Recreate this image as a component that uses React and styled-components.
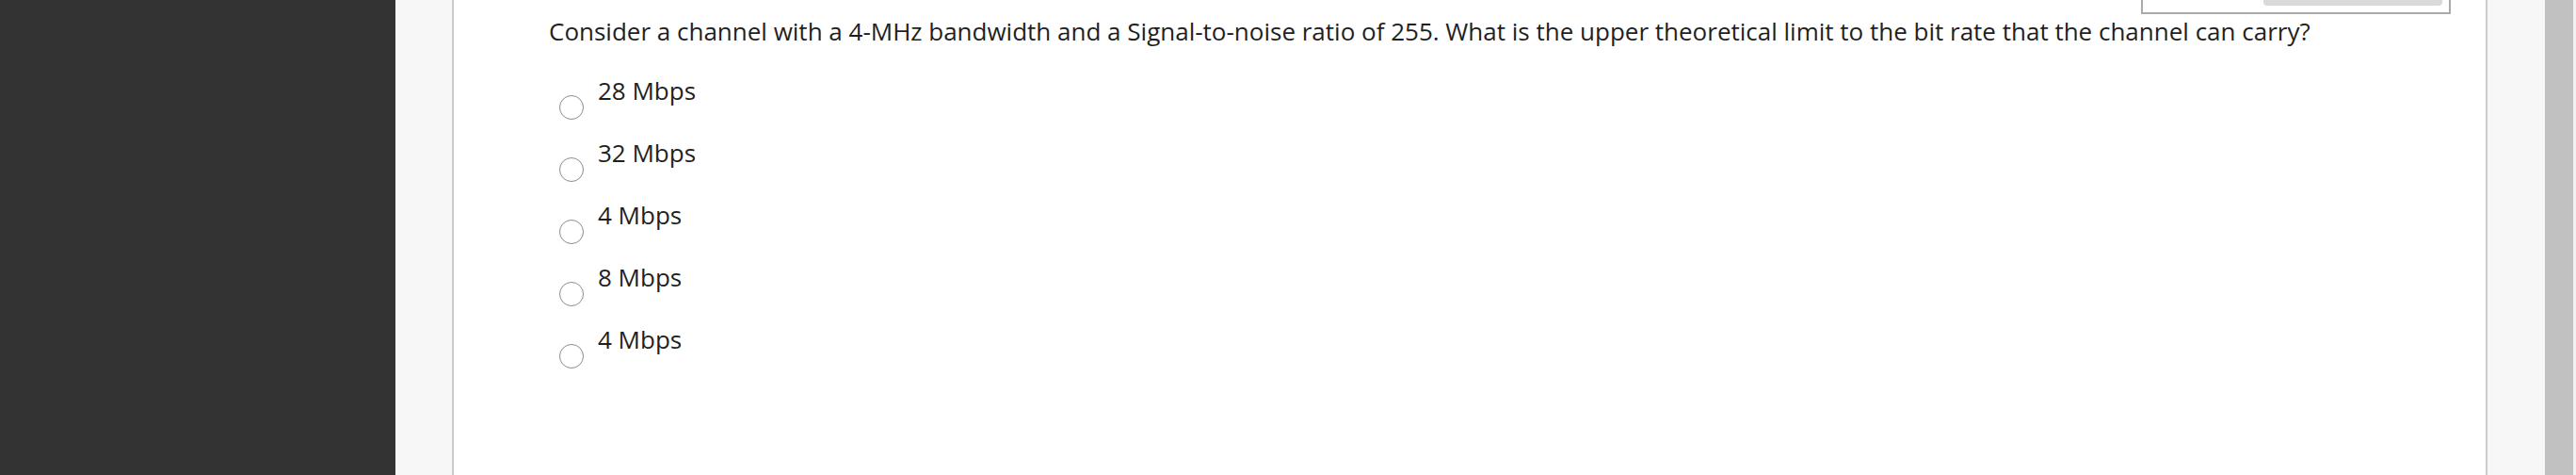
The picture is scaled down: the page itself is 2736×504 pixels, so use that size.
import React from "react";
import styled, { createGlobalStyle } from "styled-components";

const GlobalStyle = createGlobalStyle`
    html, body {
        margin: 0;
        padding: 0;
        background: #ffffff;
    }
`;

const answers = ["28 Mbps", "32 Mbps", "4 Mbps", "8 Mbps", "4 Mbps"];

const App = () => {
    return (
        <>
            <GlobalStyle />
            <Page>
                <Sidebar />
                <Gutter />
                <Content>
                    <Toolbar>
                        <TopBox>
                            <TopBar />
                        </TopBox>
                    </Toolbar>
                    <Question>
                        Consider a channel with a 4-MHz bandwidth and a Signal-to-noise ratio of 255. What is the upper theoretical limit to the bit rate that the channel can carry?
                    </Question>
                    <Answers>
                        {answers.map((a, i) => (
                            <Answer key={i}>
                                <Radio />
                                <Label>{a}</Label>
                            </Answer>
                        ))}
                    </Answers>
                </Content>
                <RightGutter />
                <Scrollbar />
                <ScrollEdge />
            </Page>
        </>
    );
}

export default App;


const Page = styled.div`
    display: flex;
    width: 2736px;
    height: 504px;
    overflow: hidden;
    font-family: "Open Sans", "Noto Sans", sans-serif;
`;

const Sidebar = styled.div`
    width: 420px;
    flex-shrink: 0;
    background: #333333;
`;

const Gutter = styled.div`
    width: 60px;
    flex-shrink: 0;
    background: #f7f7f7;
`;

const Content = styled.div`
    flex: 1;
    border-left: 2px solid #cccccc;
    background: #ffffff;
    display: flex;
    flex-direction: column;
`;

const Toolbar = styled.div`
    height: 15px;
    display: flex;
    justify-content: flex-end;
    padding-right: 37px;
`;

const TopBox = styled.div`
    box-sizing: border-box;
    width: 329px;
    height: 15px;
    border: 2px solid #aaaaaa;
    border-top: none;
    display: flex;
    justify-content: flex-end;
    padding-right: 7px;
`;

const TopBar = styled.div`
    width: 190px;
    height: 6px;
    background: #d9d9d9;
    border-radius: 0 0 4px 4px;
`;

const Question = styled.p`
    margin: 0 0 0 101px;
    font-size: 26px;
    line-height: 36px;
    color: #1f1f1f;
`;

const Answers = styled.div`
    margin: 27px 0 0 112px;
    display: flex;
    flex-direction: column;
`;

const Answer = styled.div`
    display: flex;
    align-items: flex-start;
    height: 66px;
`;

const Radio = styled.span`
    box-sizing: border-box;
    width: 26px;
    height: 26px;
    margin-top: 23px;
    border: 1.5px solid #8c8c8c;
    border-radius: 50%;
    background: #ffffff;
    flex-shrink: 0;
`;

const Label = styled.span`
    margin-left: 15px;
    font-size: 26px;
    line-height: 36px;
    color: #1f1f1f;
`;

const RightGutter = styled.div`
    width: 61px;
    flex-shrink: 0;
    border-left: 2px solid #cccccc;
    background: #f7f7f7;
`;

const Scrollbar = styled.div`
    width: 30px;
    flex-shrink: 0;
    background: #c1c1c1;
`;

const ScrollEdge = styled.div`
    width: 3px;
    flex-shrink: 0;
    background: #f1f1f1;
`;
